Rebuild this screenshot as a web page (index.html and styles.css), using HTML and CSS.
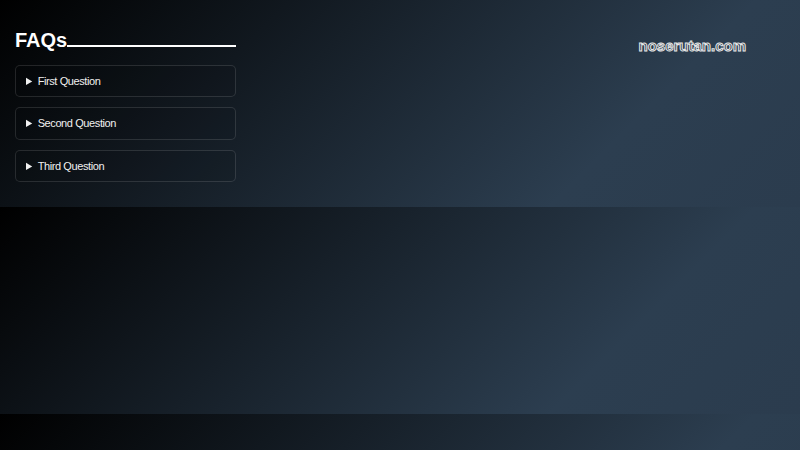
FILE: index.html
```html
<!DOCTYPE html>
<html lang="en">
<head>
<meta charset="utf-8">
<title>FAQs</title>
<link rel="stylesheet" href="styles.css">
</head>
<body>
  <div class="page">
    <section class="faq">
      <h2 class="faq-title">FAQs</h2>
      <details class="faq-item"><summary>First Question</summary><p>Answer to the first question.</p></details>
      <details class="faq-item"><summary>Second Question</summary><p>Answer to the second question.</p></details>
      <details class="faq-item"><summary>Third Question</summary><p>Answer to the third question.</p></details>
    </section>
    <aside class="brand">noserutan.com</aside>
  </div>
</body>
</html>
```
FILE: styles.css
```css
body {
  margin: 0;
  padding: 15px;
  font-family: "Liberation Sans", Arial, sans-serif;
  color: #fff;
  background: linear-gradient(135deg, #000000 0%, #2c3e50 75%, #2b3c4e 100%);
}

.page {
  display: flex;
  justify-content: space-between;
  align-items: flex-start;
}

.faq {
  width: 221px;
}

.faq-title {
  display: flex;
  align-items: flex-end;
  margin: 14px 0 13px;
  font-size: 20px;
  line-height: 23px;
  font-weight: bold;
}

.faq-title::after {
  content: "";
  flex: 1;
  height: 2px;
  margin-bottom: 5px;
  background: #fff;
}

.faq-item {
  margin-bottom: 10px;
  border: 1px solid rgba(255, 255, 255, 0.12);
  border-radius: 5px;
  background: rgba(0, 0, 0, 0.05);
}

.faq-item summary {
  padding: 8px 10px;
  font-size: 11px;
  line-height: 14.4px;
  letter-spacing: -0.4px;
  color: #f0f0f0;
  cursor: pointer;
}

.faq-item p {
  margin: 0;
  padding: 0 10px 10px;
  font-size: 12px;
}

.brand {
  margin: 22px 39px 0 0;
  font-size: 15px;
  font-weight: bold;
  line-height: 17px;
  color: transparent;
  -webkit-text-stroke: 1px #e6e6e6;
}
```
